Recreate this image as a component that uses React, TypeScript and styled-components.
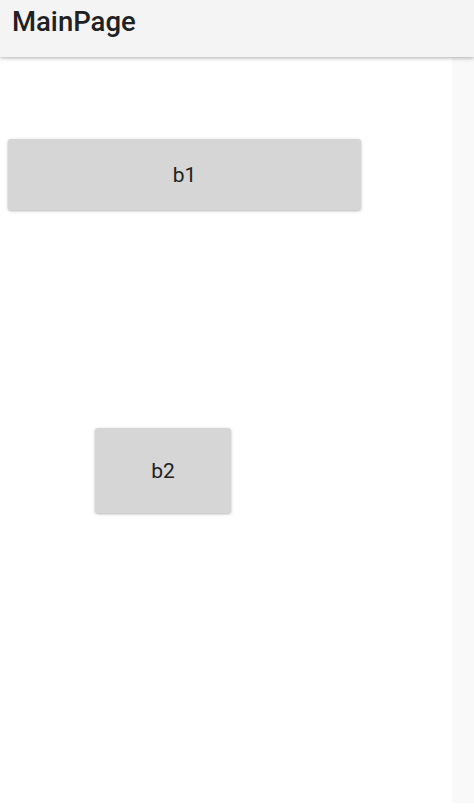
import styled, { createGlobalStyle } from "styled-components";

const GlobalStyle = createGlobalStyle`
  html, body {
    margin: 0;
    padding: 0;
    background: #ffffff;
    font-family: Roboto, "Liberation Sans", sans-serif;
  }
`;

const Page = styled.div`
  display: flex;
  flex-direction: column;
  width: 474px;
  height: 808px;
  overflow: hidden;
`;

const Header = styled.header`
  display: flex;
  align-items: flex-start;
  height: 57px;
  padding: 3px 12px 0;
  box-sizing: border-box;
  background: #f4f4f4;
  box-shadow: 0 1px 4px rgba(0, 0, 0, 0.32);
  position: relative;
  z-index: 1;
`;

const Title = styled.h1`
  margin: 0;
  font-size: 27.5px;
  font-weight: 500;
  line-height: 38px;
  color: #212121;
`;

const Body = styled.div`
  flex: 1;
  display: grid;
  grid-template-columns: 1fr 22px;
  padding-bottom: 5px;
`;

const Content = styled.main`
  display: flex;
  flex-direction: column;
  align-items: flex-start;
  background: #ffffff;
`;

const SideStrip = styled.div`
  background: #f9f9f9;
`;

const Button = styled.button<{ $w: number; $h: number; $left: number; $top: number }>`
  width: ${(p) => p.$w}px;
  height: ${(p) => p.$h}px;
  margin-left: ${(p) => p.$left}px;
  margin-top: ${(p) => p.$top}px;
  border: none;
  border-radius: 3px;
  background: #d6d6d6;
  box-shadow: 0 1px 3px rgba(0, 0, 0, 0.3);
  font-family: Roboto, "Liberation Sans", sans-serif;
  font-size: 21px;
  color: #222222;
  cursor: pointer;
`;

const App = () => {
  return (
    <Page>
      <GlobalStyle />
      <Header>
        <Title>MainPage</Title>
      </Header>
      <Body>
        <Content>
          <Button $w={353} $h={71} $left={8} $top={82}>
            b1
          </Button>
          <Button $w={136} $h={85} $left={95} $top={218}>
            b2
          </Button>
        </Content>
        <SideStrip />
      </Body>
    </Page>
  );
};

export default App;
